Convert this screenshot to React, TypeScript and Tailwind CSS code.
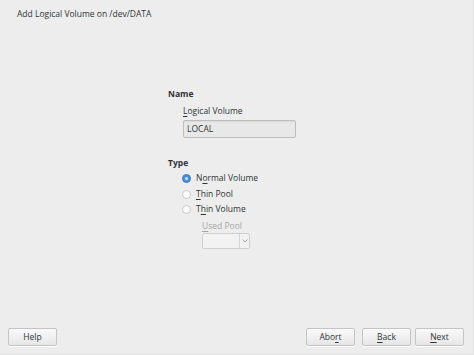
import React from 'react'

const font = { fontFamily: '"Open Sans", "DejaVu Sans", sans-serif' }

function Btn({ children }: { children: React.ReactNode }) {
  return (
    <button className="w-[49px] h-[18px] rounded-[2px] border border-[#c4c4c4] bg-gradient-to-b from-[#fafafa] to-[#e6e6e6] text-[8.5px] text-[#2e3436] flex items-center justify-center shadow-[0_1px_0_#ffffff]">
      {children}
    </button>
  )
}

function Radio({ checked, label, under }: { checked?: boolean; label: string; under: number }) {
  return (
    <div className="flex items-center h-[15.5px]">
      <div className="w-[12px] flex justify-start pl-[1px]">
        {checked ? (
          <div className="w-[9px] h-[9px] rounded-full bg-[#4a90d9] border border-[#3a78c0] flex items-center justify-center">
            <div className="w-[3px] h-[3px] rounded-full bg-[#cfe2f7]" />
          </div>
        ) : (
          <div className="w-[9px] h-[9px] rounded-full bg-[#fbfbfb] border border-[#c8c8c8]" />
        )}
      </div>
      <span className="text-[8.5px] text-[#2e3436] ml-[3px]">
        {label.slice(0, under)}
        <span className="underline underline-offset-2">{label[under]}</span>
        {label.slice(under + 1)}
      </span>
    </div>
  )
}

export default function App() {
  return (
    <div style={font} className="w-[474px] h-[355px] bg-[#ededed] flex flex-col border-r border-b border-[#e2e2e2]">
      <div className="pl-[17px] pt-[8px] text-[8.5px] text-[#2e3436]">Add Logical Volume on /dev/DATA</div>

      <div className="flex-1 pl-[168px] pt-[67px]">
        <div className="text-[8.5px] font-bold text-[#2e3436]">Name</div>
        <div className="pl-[15px] pt-[4px]">
          <div className="text-[8.5px] text-[#2e3436]">
            <span className="underline underline-offset-2">L</span>ogical Volume
          </div>
          <div className="mt-[3px] w-[113px] h-[18px] border border-[#bdbdbd] rounded-[2px] bg-[#e8e8e8] shadow-[inset_0_1px_1px_rgba(0,0,0,0.06)] flex items-center pl-[3px] text-[8.5px] text-[#2e3436]">
            LOCAL
          </div>
        </div>

        <div className="mt-[19px] text-[8.5px] font-bold text-[#2e3436]">Type</div>
        <div className="pl-[13px] pt-[1px]">
          <Radio checked label="Normal Volume" under={1} />
          <Radio label="Thin Pool" under={0} />
          <Radio label="Thin Volume" under={1} />
          <div className="pl-[21px] pt-[2px]">
            <div className="text-[8.5px] text-[#a4a7a6]">
              <span className="underline underline-offset-2">U</span>sed Pool
            </div>
            <div className="mt-[1px] w-[48px] h-[16px] border border-[#d0d0d0] rounded-[2px] bg-[#f2f2f2] flex">
              <div className="flex-1" />
              <div className="w-[10px] border-l border-[#d6d6d6] flex items-center justify-center">
                <svg width="6" height="4" viewBox="0 0 6 4">
                  <path d="M0.5 0.5 L3 3 L5.5 0.5" fill="none" stroke="#a8a8a8" strokeWidth="1" />
                </svg>
              </div>
            </div>
          </div>
        </div>
      </div>

      <div className="flex items-center pl-[8px] pr-[9px] pb-[8px]">
        <Btn>Help</Btn>
        <div className="flex-1" />
        <Btn>Abo<span className="underline underline-offset-2">r</span>t</Btn>
        <div className="w-[7px]" />
        <Btn><span className="underline underline-offset-2">B</span>ack</Btn>
        <div className="w-[4px]" />
        <Btn><span className="underline underline-offset-2">N</span>ext</Btn>
      </div>
    </div>
  )
}
